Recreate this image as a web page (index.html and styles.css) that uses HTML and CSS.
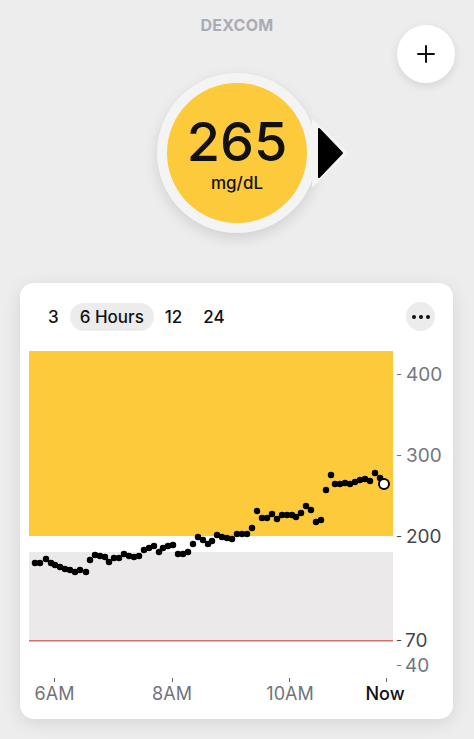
FILE: index.html
```html
<!DOCTYPE html>
<html lang="en">
<head>
    <meta charset="UTF-8">
    <meta name="viewport" content="width=device-width, initial-scale=1.0">
    <title>Dexcom</title>
    <link rel="stylesheet" href="styles.css">
</head>
<body>
    <div class="app">
        <header class="top">
            <div class="brand">Dexcom</div>
            <button class="add-btn" aria-label="Add event">
                <svg width="20" height="20" viewBox="0 0 20 20">
                    <path d="M10 2v16M2 10h16" stroke="#111" stroke-width="2" stroke-linecap="round"/>
                </svg>
            </button>
        </header>

        <section class="gauge">
            <div class="disc">
                <div class="value">265</div>
                <div class="unit">mg/dL</div>
            </div>
            <svg class="trend" width="40" height="70" viewBox="0 0 40 70">
                <path d="M0 3 L34 35 L0 67 Z" fill="#f4f4f4" stroke="#f4f4f4" stroke-width="4" stroke-linejoin="round"/>
                <path d="M7 11 L30 35 L7 59 Z" fill="#000" stroke="#000" stroke-width="2" stroke-linejoin="round"/>
            </svg>
        </section>

        <section class="card">
            <div class="range-bar">
                <div class="ranges">
                    <span class="range">3</span>
                    <span class="range active">6 Hours</span>
                    <span class="range">12</span>
                    <span class="range">24</span>
                </div>
                <button class="more-btn" aria-label="More">
                    <svg width="18" height="6" viewBox="0 0 18 6">
                        <circle cx="2" cy="3" r="2" fill="#111"/>
                        <circle cx="9" cy="3" r="2" fill="#111"/>
                        <circle cx="16" cy="3" r="2" fill="#111"/>
                    </svg>
                </button>
            </div>

            <svg class="chart" width="433" height="365" viewBox="20 345 433 365">
                <!-- bands -->
                <rect x="29" y="350" width="364" height="185" fill="#fdca3c"/>
                <rect x="29" y="551" width="364" height="89" fill="#ebe9ea"/>
                <rect x="29" y="639" width="364" height="1.5" fill="#d46e6a"/>

                <!-- y axis -->
                <g class="ylabel">
                    <text y="380"><tspan class="dash" x="396" dy="-2">-</tspan><tspan x="406" dy="2">400</tspan></text>
                    <text y="461"><tspan class="dash" x="396" dy="-2">-</tspan><tspan x="406" dy="2">300</tspan></text>
                    <text y="542" class="dark"><tspan class="dash" x="396" dy="-2">-</tspan><tspan x="406" dy="2">200</tspan></text>
                    <text y="646" class="dark"><tspan class="dash" x="396" dy="-2">-</tspan><tspan x="405" dy="2">70</tspan></text>
                    <text y="671"><tspan class="dash" x="396" dy="-2">-</tspan><tspan x="405" dy="2">40</tspan></text>
                </g>

                <!-- readings -->
                <path class="dots" d="M35 562h0M40 562h0M46 558h0M51 562h0M55 564h0M60 566h0M65 568h0M70 569h0M75 571h0M80 569h0M86 571h0
                    M90 559h0M95 554h0M100 555h0M105 556h0M109 561h0M114 557h0M119 557h0M124 553h0M129 555h0M134 556h0M139 555h0
                    M144 549h0M149 547h0M154 545h0M159 551h0M163 547h0M168 545h0M173 544h0M178 553h0M183 553h0M188 551h0
                    M193 543h0M198 536h0M203 539h0M208 543h0M212 540h0M217 534h0M222 536h0M227 537h0M232 538h0M237 533h0M242 533h0M247 533h0
                    M252 527h0M257 510h0M262 517h0M267 517h0M272 513h0M277 518h0M282 514h0M287 514h0M292 514h0M296 516h0M301 512h0
                    M306 505h0M311 509h0M316 521h0M321 519h0M326 489h0M331 474h0M335 483h0M340 483h0M345 482h0M350 483h0
                    M355 481h0M360 479h0M365 478h0M370 480h0M375 472h0M380 477h0"/>
                <circle cx="384" cy="483" r="5" fill="#fff" stroke="#000" stroke-width="2"/>

                <!-- x axis -->
                <g class="ticks">
                    <line x1="54.5" y1="677" x2="54.5" y2="681"/>
                    <line x1="172.5" y1="677" x2="172.5" y2="681"/>
                    <line x1="289.5" y1="677" x2="289.5" y2="681"/>
                    <line x1="386.5" y1="677" x2="386.5" y2="681"/>
                </g>
                <g class="xlabel">
                    <text x="54.5" y="699">6AM</text>
                    <text x="172" y="699">8AM</text>
                    <text x="290" y="699">10AM</text>
                    <text x="385" y="699" class="now">Now</text>
                </g>
            </svg>
        </section>
    </div>
</body>
</html>
```

FILE: styles.css
```css
body {
    margin: 0;
    padding: 0;
    background-color: #eeedee;
    font-family: Inter, "Liberation Sans", Arial, sans-serif;
    color: #111;
}
.app {
    width: 474px;
    height: 739px;
    overflow: hidden;
    padding-top: 17px;
    box-sizing: border-box;
}
.top {
    position: relative;
    text-align: center;
}
.brand {
    font-size: 16px;
    line-height: 16px;
    font-weight: 700;
    letter-spacing: 0.3px;
    text-transform: uppercase;
    color: #a8acb5;
}
.add-btn {
    position: absolute;
    top: 8px;
    right: 19px;
    width: 58px;
    height: 58px;
    border: none;
    border-radius: 50%;
    background-color: #fff;
    box-shadow: 0 3px 10px rgba(0, 0, 0, 0.1);
    display: flex;
    align-items: center;
    justify-content: center;
    padding: 0;
}
.gauge {
    position: relative;
    width: 160px;
    height: 160px;
    margin: 40px auto 0;
    border-radius: 50%;
    background-color: #f4f4f4;
    box-shadow: 0 5px 14px rgba(0, 0, 0, 0.12);
    display: flex;
    align-items: center;
    justify-content: center;
}
.disc {
    width: 140px;
    height: 140px;
    border-radius: 50%;
    background-color: #fdca3c;
    display: flex;
    flex-direction: column;
    align-items: center;
    justify-content: center;
    position: relative;
    z-index: 1;
}
.value {
    font-size: 54px;
    line-height: 50px;
    font-weight: 500;
    margin-top: 4px;
}
.unit {
    font-size: 17px;
    line-height: 20px;
    font-weight: 500;
    margin-top: 6px;
}
.trend {
    position: absolute;
    left: 155px;
    top: 45px;
}
.card {
    margin: 50px 21px 0 20px;
    padding: 19px 0 8px;
    background-color: #fff;
    border-radius: 14px;
    box-shadow: 0 4px 18px rgba(0, 0, 0, 0.1);
}
.range-bar {
    display: flex;
    align-items: center;
    justify-content: space-between;
    padding: 0 18px;
}
.ranges {
    display: flex;
    gap: 1px;
}
.range {
    padding: 0 10px;
    height: 28px;
    line-height: 28px;
    border-radius: 14px;
    font-size: 17px;
    font-weight: 500;
}
.range.active {
    background-color: #ececec;
}
.more-btn {
    width: 29px;
    height: 29px;
    border: none;
    border-radius: 50%;
    background-color: #ececec;
    display: flex;
    align-items: center;
    justify-content: center;
    padding: 0;
}
.chart {
    display: block;
    margin-top: 15px;
}
.ylabel text {
    font-size: 19px;
    fill: #737780;
}
.ylabel text.dark {
    fill: #44474e;
}
.ylabel .dash {
    font-size: 13px;
}
.dots {
    fill: none;
    stroke: #000;
    stroke-width: 6.5;
    stroke-linecap: round;
}
.ticks line {
    stroke: #666;
    stroke-width: 1;
}
.xlabel text {
    font-size: 18px;
    fill: #70747d;
    text-anchor: middle;
}
.xlabel text.now {
    fill: #111;
    font-weight: 500;
}
```
